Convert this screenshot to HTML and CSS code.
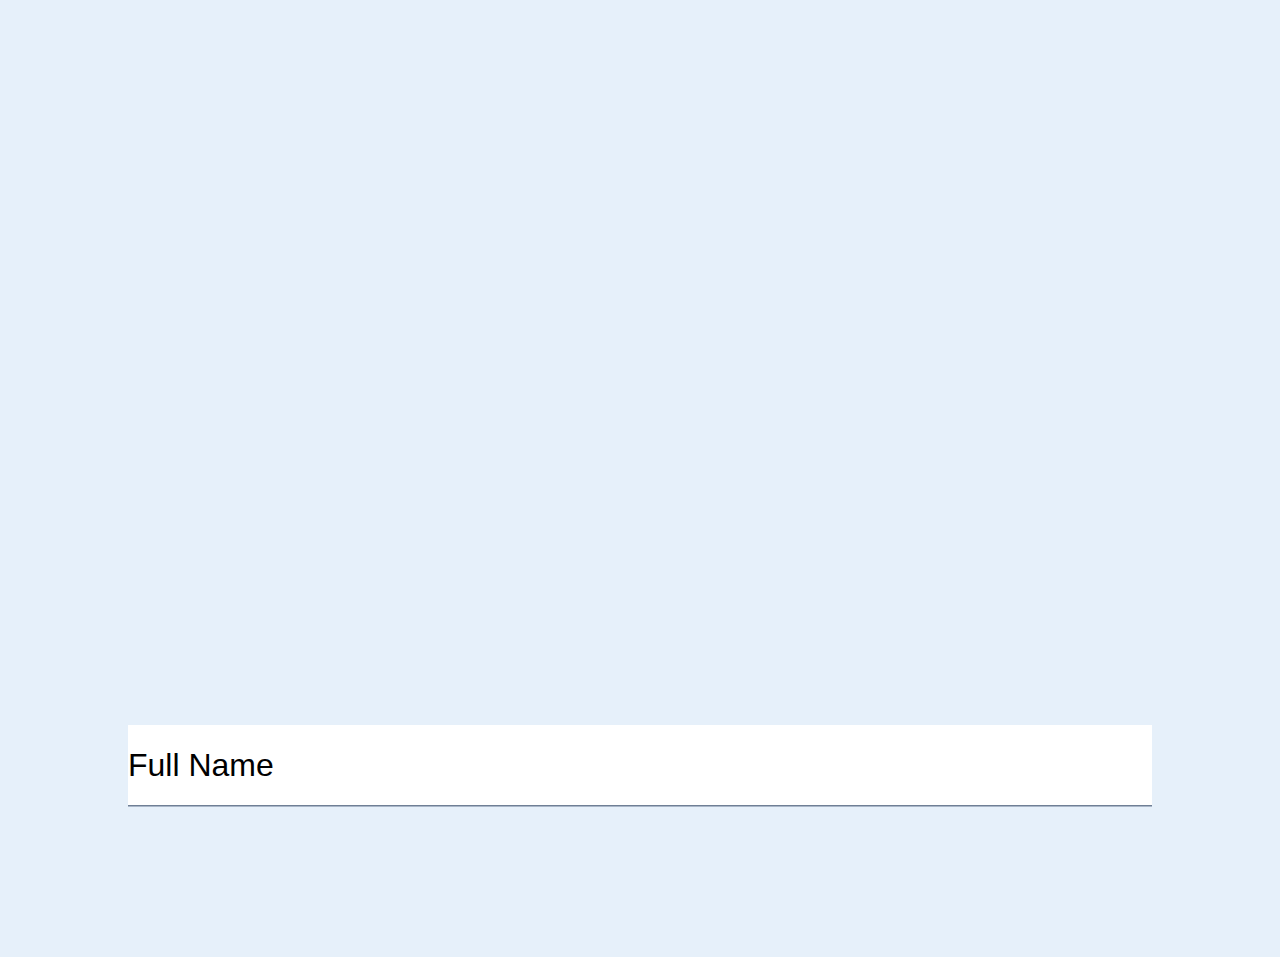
FILE: index.html
```html
<!DOCTYPE html>
<html lang="en">
<head>
<meta charset="utf-8">
<title>Full Name</title>
<link rel="stylesheet" href="styles.css">
</head>
<body>
<main class="page">
  <div class="field">
    <span class="field-label">Full Name</span>
  </div>
</main>
</body>
</html>
```
FILE: styles.css
```css
html, body {
  margin: 0;
  padding: 0;
  background: #e6f0fa;
}
.page {
  box-sizing: border-box;
  min-height: 957px;
  display: flex;
  flex-direction: column;
  justify-content: flex-end;
  padding: 0 128px 151px;
}
.field {
  height: 80px;
  background: #ffffff;
  border-bottom: 1px solid #6f7f95;
  box-shadow: 0 1px 0 #a9b6c8;
  display: flex;
  align-items: center;
}
.field-label {
  font-family: "Liberation Sans", Arial, sans-serif;
  font-size: 32px;
  line-height: 1;
  color: #000;
}
```
